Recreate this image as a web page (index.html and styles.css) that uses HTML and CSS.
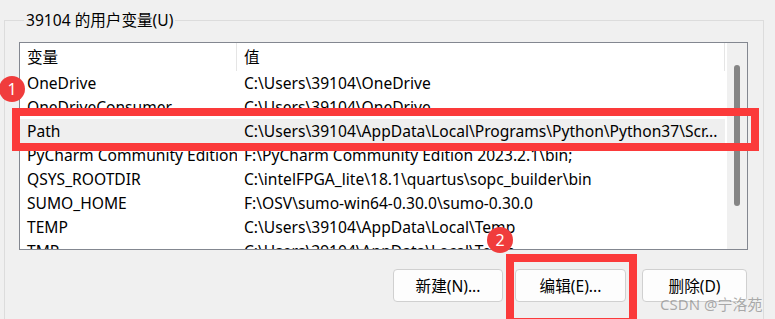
FILE: index.html
```html
<!DOCTYPE html>
<html lang="zh-CN">
<head>
<meta charset="utf-8">
<title>用户变量</title>
<link rel="stylesheet" href="styles.css">
</head>
<body>
<fieldset class="group">
  <legend class="group-title">39104 的用户变量(U)</legend>
  <div class="listbox">
    <div class="list-main">
      <div class="list-header">
        <div class="cell c1 hdr">变量</div>
        <div class="cell c2 hdr">值</div>
      </div>
      <div class="rows">
        <div class="row"><div class="cell c1">OneDrive</div><div class="cell c2">C:\Users\39104\OneDrive</div></div>
        <div class="row"><div class="cell c1">OneDriveConsumer</div><div class="cell c2">C:\Users\39104\OneDrive</div></div>
        <div class="row selected"><div class="cell c1">Path</div><div class="cell c2">C:\Users\39104\AppData\Local\Programs\Python\Python37\Scr...</div></div>
        <div class="row"><div class="cell c1">PyCharm Community Edition</div><div class="cell c2">F:\PyCharm Community Edition 2023.2.1\bin;</div></div>
        <div class="row"><div class="cell c1">QSYS_ROOTDIR</div><div class="cell c2">C:\intelFPGA_lite\18.1\quartus\sopc_builder\bin</div></div>
        <div class="row"><div class="cell c1">SUMO_HOME</div><div class="cell c2">F:\OSV\sumo-win64-0.30.0\sumo-0.30.0</div></div>
        <div class="row"><div class="cell c1">TEMP</div><div class="cell c2">C:\Users\39104\AppData\Local\Temp</div></div>
        <div class="row"><div class="cell c1">TMP</div><div class="cell c2">C:\Users\39104\AppData\Local\Temp</div></div>
      </div>
    </div>
    <div class="scrollbar"><div class="thumb"></div></div>
  </div>
  <div class="buttons">
    <button class="btn btn-new">新建(N)...</button>
    <button class="btn btn-edit">编辑(E)...</button>
    <button class="btn btn-del">删除(D)</button>
  </div>
</fieldset>

<div class="mark mark-path"></div>
<div class="badge badge-1">1</div>
<div class="mark mark-edit"></div>
<div class="badge badge-2">2</div>
<div class="watermark">CSDN @宁洛苑</div>
</body>
</html>
```

FILE: styles.css
```css
html, body {
  margin: 0;
  padding: 0;
}
body {
  width: 775px;
  height: 319px;
  overflow: hidden;
  background: #f0f0f0;
  font-family: "Noto Sans", "Noto Sans CJK SC", sans-serif;
  font-size: 15.6px;
  color: #000;
  position: relative;
}
.group {
  margin: 10px 0 0 4px;
  padding: 0 0 0 14px;
  width: 760px;
  height: 320px;
  border: 1px solid #dcdcdc;
  border-bottom: none;
  box-sizing: border-box;
  min-width: 0;
}
.group-title {
  margin-left: 5px;
  padding: 0 2px;
  line-height: 20px;
}
.listbox {
  margin-top: 12px;
  width: 729px;
  height: 208px;
  box-sizing: border-box;
  border: 1px solid #838790;
  background: #fff;
  display: flex;
}
.list-main {
  width: 705px;
  display: flex;
  flex-direction: column;
  overflow: hidden;
}
.list-header {
  display: flex;
  height: 28px;
  flex: none;
}
.list-header .cell {
  line-height: 28px;
}
.list-header .c1 {
  border-right: 1px solid #e5e5e5;
}
.list-header .c2 {
  border-right: 1px solid #e5e5e5;
  width: 486px;
}
.rows {
  flex: 1;
  overflow: hidden;
}
.row {
  display: flex;
  height: 24px;
  line-height: 24px;
}
.row.selected {
  background: #efefef;
}
.cell {
  white-space: nowrap;
  overflow: hidden;
  box-sizing: border-box;
  padding-left: 7px;
}
.c1 {
  width: 217px;
  flex: none;
}
.c2 {
  flex: 1;
}
.scrollbar {
  flex: 1;
  background: #f0f0f0;
  margin-left: 2px;
  padding: 22px 0 0 7px;
  box-sizing: border-box;
}
.thumb {
  width: 6px;
  height: 141px;
  background: #858585;
  border-radius: 3px;
}
.buttons {
  display: flex;
  margin-top: 19px;
  padding-left: 374px;
}
.btn {
  height: 33px;
  box-sizing: border-box;
  background: #fdfdfd;
  border: 1px solid #d0d0d0;
  border-radius: 4px;
  font-family: inherit;
  font-size: 15.6px;
  color: #000;
  padding: 0;
}
.btn-new { width: 110px; }
.btn-edit { width: 111px; margin-left: 12px; }
.btn-del { width: 105px; margin-left: 16px; }

.mark {
  position: absolute;
  box-sizing: border-box;
  border: 8px solid #fb3a3a;
}
.mark-path {
  left: 12px;
  top: 108px;
  width: 747px;
  height: 43px;
}
.mark-edit {
  left: 506px;
  top: 254px;
  width: 131px;
  height: 72px;
}
.badge {
  position: absolute;
  width: 26px;
  height: 26px;
  border-radius: 50%;
  background: #f03c3c;
  color: #fff;
  font-size: 16px;
  line-height: 26px;
  text-align: center;
}
.badge-1 { left: -1px; top: 76px; }
.badge-2 { left: 487px; top: 227px; }
.watermark {
  position: absolute;
  left: 660px;
  top: 293px;
  font-size: 15px;
  color: rgba(120, 120, 120, 0.6);
  white-space: nowrap;
}
```
